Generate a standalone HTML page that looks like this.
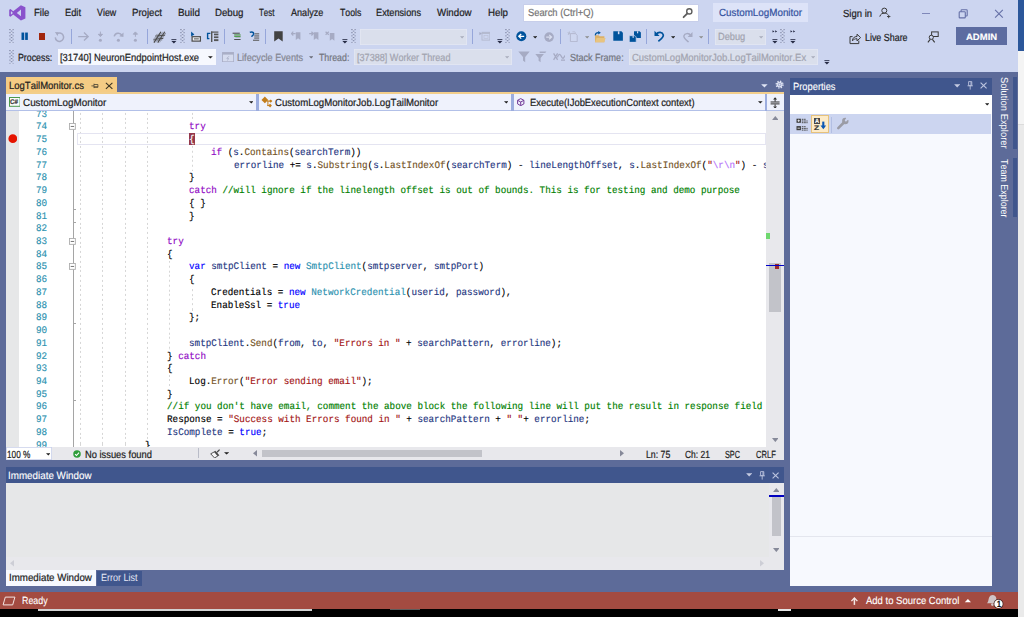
<!DOCTYPE html>
<html lang="en">
<head>
<meta charset="utf-8">
<title>CustomLogMonitor - LogTailMonitor.cs</title>
<style>
html,body{margin:0;padding:0}
body{width:1024px;height:617px;position:relative;overflow:hidden;background:#eaeaea;font-family:"Liberation Sans",sans-serif;font-size:10.4px;color:#1e1e1e;text-rendering:geometricPrecision;font-kerning:none}
.a{position:absolute;display:block}
.t{position:absolute;white-space:pre;margin:0;padding:0;line-height:12px;transform-origin:0 0;-webkit-text-stroke:0.22px currentColor}
.c,.n{position:absolute;white-space:pre;font-family:"Liberation Mono",monospace;font-size:10px;line-height:12px;color:#000;transform-origin:0 0;-webkit-text-stroke:0.15px currentColor}
.n{color:#2b91af}
.l{-webkit-text-stroke:0.12px currentColor}
.l0{-webkit-text-stroke:0}
.gd{width:1px;background:repeating-linear-gradient(to bottom,#d6d6d6 0,#d6d6d6 2px,transparent 2px,transparent 4.773px)}
.w{color:#fff}.k{color:#8f08c4}.b{color:#0000ff}.y{color:#2b91af}.m{color:#74531f}.v{color:#1f377f}.s{color:#a31515}.e{color:#b776fb}.g{color:#008000}
</style>
</head>
<body>
<!-- desktop strip right of the window + taskbar edge -->
<div class="a" style="left:1016.00px;top:50.00px;width:8.00px;height:567.00px;background:#eaeaea;"></div>
<div class="a" style="left:1016.00px;top:50.00px;width:8.00px;height:74.90px;background:#dcdcdc;"></div>
<div class="a" style="left:1016.00px;top:50.00px;width:8.00px;height:74.10px;background:#f4f4f4;"></div>
<div class="a" style="left:1016.00px;top:0.00px;width:8.00px;height:50.60px;background:#2b579a;"></div>
<!-- IDE window -->
<div class="a" style="left:0.00px;top:0.00px;width:1017.50px;height:617.00px;background:#5d6b99;"></div>
<!-- command bar background -->
<div class="a" style="left:0.00px;top:0.00px;width:1017.50px;height:72.00px;background:#ccd5f0;"></div>
<!-- status bar -->
<div class="a" style="left:0.00px;top:591.50px;width:1017.50px;height:17.90px;background:#a34b41;"></div>
<div class="a" style="left:0.00px;top:609.10px;width:1017.50px;height:7.90px;background:#000000;"></div>
<div class="a" style="left:38.00px;top:609.20px;width:274.00px;height:1.50px;background:#d2d2d2;"></div>
<div class="a" style="left:390.20px;top:609.30px;width:29.60px;height:1.20px;background:#5c5c5c;"></div>
<div class="a" style="left:777.50px;top:609.20px;width:13.50px;height:1.50px;background:#e4e4e4;"></div>
<!-- Visual Studio logo -->
<svg class="a" style="left:9.20px;top:4.80px;" width="16.6" height="15.8" viewBox="0 0 16.6 15.8"><path fill="#8a52cc" d="M11.9 0.2 L16.4 2.3 L16.4 13.5 L11.9 15.6 L4.2 9.6 L1.5 11.7 L0.2 11.0 L0.2 4.8 L1.5 4.1 L4.2 6.2 Z M1.9 6.0 L1.9 9.8 L4.0 7.9 Z M12.0 4.6 L7.8 7.9 L12.0 11.2 Z"/></svg>
<!-- menu -->
<div class="t" style="left:34.42px;top:8px;color:#1e1e1e;transform:scaleX(0.9195);">File</div>
<div class="t" style="left:64.84px;top:8px;color:#1e1e1e;transform:scaleX(0.8946);">Edit</div>
<div class="t" style="left:97.46px;top:8px;color:#1e1e1e;transform:scaleX(0.8525);">View</div>
<div class="t" style="left:132.16px;top:8px;color:#1e1e1e;transform:scaleX(0.9256);">Project</div>
<div class="t" style="left:177.89px;top:8px;color:#1e1e1e;transform:scaleX(0.9490);">Build</div>
<div class="t" style="left:215.01px;top:8px;color:#1e1e1e;transform:scaleX(0.9305);">Debug</div>
<div class="t" style="left:259.42px;top:8px;color:#1e1e1e;transform:scaleX(0.7632);">Test</div>
<div class="t" style="left:291.43px;top:8px;color:#1e1e1e;transform:scaleX(0.8722);">Analyze</div>
<div class="t" style="left:339.75px;top:8px;color:#1e1e1e;transform:scaleX(0.8400);">Tools</div>
<div class="t" style="left:376.34px;top:8px;color:#1e1e1e;transform:scaleX(0.8853);">Extensions</div>
<div class="t" style="left:437.41px;top:8px;color:#1e1e1e;transform:scaleX(0.9359);">Window</div>
<div class="t" style="left:487.90px;top:8px;color:#1e1e1e;transform:scaleX(0.9378);">Help</div>
<!-- search box -->
<div class="a" style="left:524.40px;top:4.75px;width:173.70px;height:16.25px;background:#ffffff;box-shadow:0 0 0 0.6px #c3cbe6;"></div>
<div class="t" style="left:527.88px;top:8px;color:#767676;transform:scaleX(0.8974);">Search (Ctrl+Q)</div>
<svg class="a" style="left:681.50px;top:6.50px;" width="12" height="12" viewBox="0 0 12 12"><circle cx="7.3" cy="4.4" r="2.6" fill="none" stroke="#5e5e5e" stroke-width="1.4"/><path d="M5.4 6.4 L1.6 10.2" stroke="#5e5e5e" stroke-width="1.8" stroke-linecap="round"/></svg>
<!-- solution name badge -->
<div class="a" style="left:712.90px;top:3.10px;width:95.20px;height:18.80px;background:#dde3f8;"></div>
<div class="t" style="left:719.10px;top:8px;color:#3553a0;transform:scaleX(0.9454);">CustomLogMonitor</div>
<!-- sign in + window buttons -->
<div class="t" style="left:843.27px;top:9px;color:#1e1e1e;transform:scaleX(0.9135);">Sign in</div>
<svg class="a" style="left:878.50px;top:6.50px;" width="13" height="12.5" viewBox="0 0 13 12.5"><circle cx="5.3" cy="3.6" r="2.5" fill="none" stroke="#3a3a3a" stroke-width="1"/><path d="M0.8 9.6 C1.6 6.6 3.6 6.2 5.3 6.2 C6.8 6.2 8 6.5 8.9 7.6" fill="none" stroke="#3a3a3a" stroke-width="1"/><path d="M9.7 7.8 V11.2 M8 9.5 H11.4" stroke="#3a3a3a" stroke-width="0.9"/></svg>
<div class="a" style="left:921.90px;top:12.50px;width:8.20px;height:1.30px;background:#7f88b9;"></div>
<svg class="a" style="left:957.80px;top:8.60px;" width="10.4" height="10" viewBox="0 0 10.4 10"><rect x="1.2" y="2.8" width="6.1" height="6.1" rx="0.7" fill="none" stroke="#646fa6" stroke-width="1.1"/><path d="M3.1 2.8 V1.4 Q3.1 0.7 3.8 0.7 H8.5 Q9.2 0.7 9.2 1.4 V6.3 Q9.2 7 8.5 7 H7.3" fill="none" stroke="#646fa6" stroke-width="1.1"/></svg>
<svg class="a" style="left:994.40px;top:8.80px;" width="10" height="10" viewBox="0 0 10 10"><path d="M1.1 0.8 L8.8 8.6 M8.8 0.8 L1.1 8.6" stroke="#646fa6" stroke-width="1.1"/></svg>
<!-- live share / feedback / admin -->
<svg class="a" style="left:848.60px;top:33.00px;" width="12.5" height="11.5" viewBox="0 0 12.5 11.5"><path d="M3.6 3.6 H1 V10.6 H9.8 V7.6" fill="none" stroke="#3a3a3a" stroke-width="1"/><path d="M3.4 7.8 C3.6 5 5.2 3.6 8 3.5 V1.2 L11.6 4.6 L8 7.9 V5.7 C6.1 5.7 4.6 6.3 3.4 7.8 Z" fill="none" stroke="#3a3a3a" stroke-width="1" stroke-linejoin="round"/></svg>
<div class="t" style="left:864.72px;top:33px;color:#1e1e1e;transform:scaleX(0.8563);">Live Share</div>
<svg class="a" style="left:926.80px;top:30.60px;" width="12" height="12" viewBox="0 0 12 12"><rect x="4.6" y="0.9" width="6.6" height="4.6" fill="none" stroke="#3a3a3a" stroke-width="1"/><circle cx="4.3" cy="6.3" r="2.1" fill="#ccd5f0" stroke="#3a3a3a" stroke-width="1"/><path d="M0.9 11.4 L3.2 8.3 M7.7 11.4 L5.4 8.3" stroke="#3a3a3a" stroke-width="1.1"/></svg>
<div class="a" style="left:956.40px;top:26.90px;width:50.20px;height:18.10px;background:#5c6ca1;"></div>
<div class="t l" style="left:966.26px;top:31px;font-size:9.2px;color:#ffffff;font-weight:bold;transform:scaleX(1.0340);">ADMIN</div>
<!-- status bar content -->
<svg class="a" style="left:2.40px;top:596.20px;" width="14" height="10" viewBox="0 0 14 10"><path d="M3.3 1.1 H12.9 L10.7 8.9 H1.1 Z" fill="none" stroke="#f3e4e2" stroke-width="1"/></svg>
<div class="t l" style="left:21.97px;top:596px;color:#ffffff;transform:scaleX(0.8513);">Ready</div>
<svg class="a" style="left:850.00px;top:596.40px;" width="9" height="9.5" viewBox="0 0 9 9.5"><path d="M4.4 8.9 V2.4" fill="none" stroke="#f3e7e5" stroke-width="1.5"/><path d="M0.9 4.7 L4.4 0.9 L7.9 4.7 L6.9 5.5 L4.4 2.9 L1.9 5.5 Z" fill="#f3e7e5"/></svg>
<div class="t l" style="left:866.18px;top:596px;color:#ffffff;transform:scaleX(0.9138);">Add to Source Control</div>
<svg class="a" style="left:963.50px;top:598.40px;" width="8" height="5" viewBox="0 0 8 5"><path d="M0.8 4.3 L3.9 0.9 L7 4.3 Z" fill="#ffffff"/></svg>
<svg class="a" style="left:986.30px;top:593.80px;" width="18" height="15" viewBox="0 0 18 15"><path d="M1 9.2 C2.6 7.8 2.3 5.4 3.1 3.4 C3.9 1.6 5.4 0.8 7 0.9 C9.2 1.1 10.2 2.8 10.4 4.8 C10.6 6.6 10.8 8 11.9 9.2 Z" fill="#cfc5c7"/><circle cx="6.4" cy="10.6" r="1.4" fill="#cfc5c7"/><circle cx="12.5" cy="9.9" r="4.9" fill="#40221f"/><circle cx="12.5" cy="9.9" r="4.2" fill="#ffffff"/></svg>
<div class="t" style="left:996.65px;top:598px;font-size:9.0px;color:#111111;font-weight:bold;transform:scaleX(0.7880);">1</div>
<svg class="a" width="0" height="0" style="left:0;top:0"><defs><pattern id="gp" width="5.4" height="3.22" patternUnits="userSpaceOnUse"><rect x="0.3" y="0" width="1.2" height="1" fill="#727998"/><rect x="3.5" y="0" width="1.2" height="1" fill="#727998"/><rect x="1.9" y="0.05" width="1.2" height="0.9" fill="#e4e8f7"/><rect x="1.9" y="1.61" width="1.2" height="1" fill="#666d8e"/></pattern></defs></svg>
<!-- toolbar row: debug -->
<svg class="a" style="left:9.10px;top:29.10px;" width="5.4" height="13.9" viewBox="0 0 5.4 13.9"><rect width="5.4" height="13.9" fill="url(#gp)"/></svg>
<svg class="a" style="left:20.60px;top:31.80px;" width="8" height="8.6" viewBox="0 0 8 8.6"><rect x="0.5" y="0.55" width="2.7" height="7.4" fill="#00539c"/><rect x="4.15" y="0.55" width="2.7" height="7.4" fill="#00539c"/></svg>
<div class="a" style="left:39.00px;top:33.20px;width:6.10px;height:6.60px;background:#a1260d;"></div>
<svg class="a" style="left:54.40px;top:31.00px;" width="11" height="11.5" viewBox="0 0 11 11.5"><path d="M2.6 3.2 A4.15 4.15 0 1 1 1.3 6.4" fill="none" stroke="#a6abc4" stroke-width="1.5"/><path d="M0.9 0.9 L4.6 1.3 L3.6 4.9 Z" fill="#a6abc4"/></svg>
<div class="a" style="left:70.70px;top:28.80px;width:1.20px;height:15.40px;background:#96a6da;"></div>
<svg class="a" style="left:77.80px;top:32.00px;" width="11.5" height="9.5" viewBox="0 0 11.5 9.5"><path d="M0.2 4.6 H9.8 M6 0.6 L10.2 4.6 L6 8.6" fill="none" stroke="#a6abc4" stroke-width="1.4"/></svg>
<svg class="a" style="left:97.40px;top:31.40px;" width="7" height="11.5" viewBox="0 0 7 11.5"><path d="M3.4 0.6 V4 M1.3 3.3 H5.5 L3.4 5.6 Z" fill="#a6abc4" stroke="#a6abc4" stroke-width="1"/><circle cx="3.4" cy="9.2" r="1.55" fill="#a6abc4"/></svg>
<svg class="a" style="left:113.00px;top:31.40px;" width="11.5" height="11.5" viewBox="0 0 11.5 11.5"><path d="M1.2 5.4 C2.2 1.6 7.2 1.2 8.9 4.4" fill="none" stroke="#a6abc4" stroke-width="1.5"/><path d="M10.6 1.6 L10.4 6.1 L6.2 5.3 Z" fill="#a6abc4"/><circle cx="5.4" cy="9.2" r="1.55" fill="#a6abc4"/></svg>
<svg class="a" style="left:132.30px;top:31.40px;" width="7" height="11.5" viewBox="0 0 7 11.5"><path d="M3.4 5.8 V2.6 M1.3 3.2 H5.5 L3.4 0.9 Z" fill="#a6abc4" stroke="#a6abc4" stroke-width="1"/><circle cx="3.4" cy="9.2" r="1.55" fill="#a6abc4"/></svg>
<div class="a" style="left:147.00px;top:28.80px;width:1.20px;height:15.40px;background:#96a6da;"></div>
<svg class="a" style="left:153.20px;top:30.60px;" width="13" height="12.8" viewBox="0 0 13 12.8"><g stroke="#4b4b4b" fill="none"><path d="M0.95 11.6 L7.95 0.7 M4.75 11.6 L11.75 0.7" stroke-width="1.2"/><path d="M2.1 5.1 L12.1 4.2 M0.4 8.3 L10.3 7.4" stroke-width="1"/><path d="M2.9 11.6 L9.9 0.7 M6.6 11.6 L13 1.6 M1.2 6.7 L11.2 5.8 M-0.4 9.8 L9.4 8.9 M3 3.5 L12.8 2.6" stroke-width="0.45" opacity="0.7"/></g></svg>
<svg class="a" style="left:171.40px;top:39.00px;" width="6" height="5" viewBox="0 0 6 5"><rect x="0.4" y="0.2" width="5" height="0.9" fill="#262b45"/><path d="M0.4 1.9 H5.4 L2.9 4.5 Z" fill="#262b45"/></svg>
<!-- toolbar row: text editor -->
<svg class="a" style="left:179.90px;top:29.10px;" width="5.4" height="13.9" viewBox="0 0 5.4 13.9"><rect width="5.4" height="13.9" fill="url(#gp)"/></svg>
<svg class="a" style="left:190.00px;top:30.80px;" width="12" height="11" viewBox="0 0 12 11"><path d="M1.1 0.6 L1.1 5.6 L4.4 3.4 Z" fill="#00539c"/><rect x="2.1" y="5.7" width="8.3" height="4.4" fill="#f4f5fa" stroke="#4f4f4f" stroke-width="1.25"/><rect x="3.9" y="7.4" width="4.9" height="1" fill="#4f4f4f"/></svg>
<svg class="a" style="left:206.40px;top:30.60px;" width="13" height="11.8" viewBox="0 0 13 11.8"><path d="M4.4 2.4 H1.6 V7.6 H3.4" fill="none" stroke="#00539c" stroke-width="1.4"/><g fill="#555"><rect x="5" y="0.5" width="7.4" height="1.2"/><rect x="5" y="0.5" width="1.4" height="10.6"/><rect x="8" y="2.6" width="4.4" height="1.7"/><rect x="8" y="5.4" width="4.4" height="1.7"/><rect x="8" y="8.2" width="4.4" height="1.9"/></g></svg>
<div class="a" style="left:223.80px;top:28.80px;width:1.20px;height:15.40px;background:#96a6da;"></div>
<svg class="a" style="left:232.20px;top:31.80px;" width="9" height="8.5" viewBox="0 0 9 8.5"><rect x="0.6" y="0.7" width="7.2" height="1" fill="#424242"/><rect x="2.2" y="2.3" width="6.4" height="1" fill="#4fa24f"/><rect x="2.2" y="3.3" width="6.4" height="0.7" fill="#8c958c"/><rect x="2.2" y="4" width="6.4" height="1" fill="#4fa24f"/><rect x="3.4" y="5.3" width="5.2" height="0.7" fill="#a3a7b3"/><rect x="2.2" y="7.1" width="6.4" height="1" fill="#424242"/></svg>
<svg class="a" style="left:249.00px;top:31.20px;" width="11" height="10.5" viewBox="0 0 11 10.5"><path d="M0.8 1.4 C2.8 0.4 5 1.4 4.6 3.2 C4.3 4.4 3 4.6 2.6 5.8" fill="none" stroke="#00539c" stroke-width="1.5"/><g fill="#5d5d5d"><rect x="5.6" y="2.3" width="4.6" height="1.1"/><rect x="5.2" y="4.4" width="5" height="1.1"/><rect x="5.2" y="6.5" width="5" height="1.1"/><rect x="4" y="8.7" width="6.2" height="1.1"/></g></svg>
<div class="a" style="left:265.20px;top:28.80px;width:1.20px;height:15.40px;background:#96a6da;"></div>
<svg class="a" style="left:273.70px;top:30.90px;" width="9" height="10.8" viewBox="0 0 9 10.8"><path d="M0.2 0.2 H8.7 V10.5 L4.45 7.6 L0.2 10.5 Z" fill="#424242"/></svg>
<svg class="a" style="left:291.40px;top:31.20px;" width="10" height="10" viewBox="0 0 10 10"><path d="M4.8 1.2 H9.4 V9.1 L7.1 7.3 L4.8 9.1 Z" fill="#a6abc4"/><path d="M0.5 2.6 H4.6 M2.3 0.7 L0.4 2.6 L2.3 4.5" fill="none" stroke="#a6abc4" stroke-width="1.2"/></svg>
<svg class="a" style="left:308.60px;top:31.20px;" width="10" height="10" viewBox="0 0 10 10"><path d="M4.8 1.2 H9.4 V9.1 L7.1 7.3 L4.8 9.1 Z" fill="#a6abc4"/><path d="M0.2 2.6 H4.4 M2.4 0.7 L4.4 2.6 L2.4 4.5" fill="none" stroke="#a6abc4" stroke-width="1.2"/></svg>
<svg class="a" style="left:325.20px;top:31.20px;" width="10" height="10" viewBox="0 0 10 10"><path d="M4.8 1.9 H9.4 V9.799999999999999 L7.1 8.0 L4.8 9.799999999999999 Z" fill="#a6abc4"/><path d="M0.6 0.7 L3.8 3.7 M3.8 0.7 L0.6 3.7" fill="none" stroke="#a6abc4" stroke-width="1.2"/></svg>
<svg class="a" style="left:342.10px;top:39.00px;" width="6" height="5" viewBox="0 0 6 5"><rect x="0.4" y="0.2" width="5" height="0.9" fill="#262b45"/><path d="M0.4 1.9 H5.4 L2.9 4.5 Z" fill="#262b45"/></svg>
<!-- toolbar row: find / navigation / standard -->
<svg class="a" style="left:351.00px;top:29.10px;" width="5.4" height="13.9" viewBox="0 0 5.4 13.9"><rect width="5.4" height="13.9" fill="url(#gp)"/></svg>
<div class="a" style="left:360.20px;top:28.50px;width:107.00px;height:16.10px;background:#dadfec;box-shadow:inset 0 0 0 0.8px #e3e7f3;"></div>
<svg class="a" style="left:459.80px;top:35.60px;" width="4.2" height="3" viewBox="0 0 4.2 3"><path d="M0 0.2 H4.2 L2.1 2.6 Z" fill="#a9adbd"/></svg>
<div class="a" style="left:471.90px;top:28.80px;width:1.20px;height:15.40px;background:#96a6da;"></div>
<svg class="a" style="left:478.80px;top:31.20px;" width="11.6" height="9.8" viewBox="0 0 11.6 9.8"><path d="M0.4 0.9 L3 2.6 L0.4 4.3 Z" fill="#a6abc4"/><rect x="3" y="1.3" width="7.9" height="7.8" fill="none" stroke="#b3b8cd" stroke-width="0.9"/><rect x="3" y="1.3" width="7.9" height="1.6" fill="#b3b8cd"/><rect x="5" y="4.6" width="4" height="2.8" fill="none" stroke="#bcc1d6" stroke-width="0.7"/></svg>
<svg class="a" style="left:496.60px;top:39.00px;" width="6" height="5" viewBox="0 0 6 5"><rect x="0.4" y="0.2" width="5" height="0.9" fill="#262b45"/><path d="M0.4 1.9 H5.4 L2.9 4.5 Z" fill="#262b45"/></svg>
<svg class="a" style="left:505.10px;top:29.10px;" width="5.4" height="13.9" viewBox="0 0 5.4 13.9"><rect width="5.4" height="13.9" fill="url(#gp)"/></svg>
<svg class="a" style="left:516.20px;top:31.20px;" width="10.6" height="10.6" viewBox="0 0 10.6 10.6"><circle cx="5.3" cy="5.3" r="5" fill="#00539c"/><path d="M8.2 5.3 H3 M5.2 3 L2.8 5.3 L5.2 7.6" fill="none" stroke="#fff" stroke-width="1.3"/></svg>
<svg class="a" style="left:532.85px;top:35.60px;" width="4.3" height="3" viewBox="0 0 4.3 3"><path d="M0 0.2 H4.3 L2.15 2.6 Z" fill="#1e1e1e"/></svg>
<svg class="a" style="left:543.70px;top:31.60px;" width="10.2" height="10.2" viewBox="0 0 10.2 10.2"><circle cx="5.1" cy="5.1" r="4.8" fill="#a6abc4"/><path d="M2.2 5.1 H7.4 M5.2 2.9 L7.6 5.1 L5.2 7.3" fill="none" stroke="#d9def0" stroke-width="1.2"/></svg>
<div class="a" style="left:559.60px;top:28.80px;width:1.20px;height:15.40px;background:#96a6da;"></div>
<svg class="a" style="left:567.40px;top:31.00px;" width="11.2" height="11.4" viewBox="0 0 11.2 11.4"><path d="M3.4 2.6 H8.6 L10.2 4.4 V10.6 H3.4 Z" fill="#cfd7f0" stroke="#b1b6cd" stroke-width="0.9"/><path d="M1.2 3.4 L2.6 1.2 M0.6 1.6 L3.4 3 M2.4 0.4 L1.6 4" stroke="#b4b9ce" stroke-width="0.8"/><path d="M5.4 0.8 H7.8 L8.8 2.4" fill="none" stroke="#b4b9ce" stroke-width="0.7"/></svg>
<svg class="a" style="left:584.55px;top:35.60px;" width="4.3" height="3" viewBox="0 0 4.3 3"><path d="M0 0.2 H4.3 L2.15 2.6 Z" fill="#8c8c8c"/></svg>
<svg class="a" style="left:594.20px;top:30.80px;" width="12" height="12" viewBox="0 0 12 12"><path d="M1 4.2 H4.6 L5.6 5.3 H10.4 V11.2 H1 Z" fill="#dcb067"/><path d="M1 11.2 L2.6 7 H11.6 L10.2 11.2 Z" fill="#e8c47f"/><path d="M1.4 4.4 C1.2 2.4 2.6 1.5 4.6 1.6" fill="none" stroke="#00539c" stroke-width="1.3"/><path d="M4.2 0 L6.9 1.7 L4.2 3.5 Z" fill="#00539c"/></svg>
<svg class="a" style="left:612.60px;top:31.40px;" width="10.2" height="10" viewBox="0 0 10.2 10"><path d="M0.3 0.3 H8.4 L9.9 1.8 V9.7 H0.3 Z" fill="#00539c"/><rect x="4.9" y="0.3" width="1.5" height="2.9" fill="#d5dcf3"/></svg>
<svg class="a" style="left:629.20px;top:30.80px;" width="12.2" height="11.6" viewBox="0 0 12.2 11.6"><path d="M5 0.3 H10.6 L11.9 1.6 V7 H5 Z" fill="#00539c"/><rect x="8" y="0.3" width="1.2" height="2" fill="#d5dcf3"/><path d="M0.3 4.7 H5.9 L7.2 6 V11.3 H0.3 Z" fill="#00539c" stroke="#ccd5f0" stroke-width="0.7"/><rect x="3.6" y="5" width="1.1" height="1.9" fill="#d5dcf3"/></svg>
<div class="a" style="left:645.90px;top:28.80px;width:1.20px;height:15.40px;background:#96a6da;"></div>
<svg class="a" style="left:653.60px;top:30.40px;" width="11" height="12" viewBox="0 0 11 12"><path d="M2.2 4.4 C4.2 1.4 8.6 2 9.3 4.9 C9.8 7.2 7.4 8.8 4.4 11.3" fill="none" stroke="#00539c" stroke-width="1.7"/><path d="M0.5 0.8 V5.9 H5.6 Z" fill="#00539c"/></svg>
<svg class="a" style="left:671.15px;top:35.60px;" width="4.3" height="3" viewBox="0 0 4.3 3"><path d="M0 0.2 H4.3 L2.15 2.6 Z" fill="#1e1e1e"/></svg>
<svg class="a" style="left:681.60px;top:30.60px;" width="11" height="12" viewBox="0 0 11 12"><path d="M8.8 4.4 C6.8 1.6 2.6 2.2 1.9 4.9 C1.4 7.2 3.8 8.6 6.6 11" fill="none" stroke="#a6abc4" stroke-width="1.4"/><path d="M10.5 1 V5.9 H5.6 Z" fill="#a6abc4"/></svg>
<svg class="a" style="left:699.05px;top:35.60px;" width="4.3" height="3" viewBox="0 0 4.3 3"><path d="M0 0.2 H4.3 L2.15 2.6 Z" fill="#8c8c8c"/></svg>
<div class="a" style="left:707.90px;top:28.80px;width:1.20px;height:15.40px;background:#96a6da;"></div>
<div class="a" style="left:715.20px;top:28.50px;width:50.80px;height:16.10px;background:#dadfec;box-shadow:inset 0 0 0 0.8px #e3e7f3;"></div>
<div class="t" style="left:718.14px;top:32px;color:#a2a4b0;transform:scaleX(0.8893);">Debug</div>
<svg class="a" style="left:758.80px;top:35.60px;" width="4.2" height="3" viewBox="0 0 4.2 3"><path d="M0 0.2 H4.2 L2.1 2.6 Z" fill="#a9adbd"/></svg>
<svg class="a" style="left:771.50px;top:39.00px;" width="6" height="5" viewBox="0 0 6 5"><rect x="0.4" y="0.2" width="5" height="0.9" fill="#262b45"/><path d="M0.4 1.9 H5.4 L2.9 4.5 Z" fill="#262b45"/></svg>
<svg class="a" style="left:771.50px;top:30.00px;" width="6" height="3" viewBox="0 0 6 3"><path d="M0.5 0.2 L2.5 1.4 L0.5 2.6 Z M3.2 0.2 L5.2 1.4 L3.2 2.6 Z" fill="#262b45"/></svg>
<svg class="a" style="left:780.10px;top:29.10px;" width="5.4" height="13.9" viewBox="0 0 5.4 13.9"><rect width="5.4" height="13.9" fill="url(#gp)"/></svg>
<svg class="a" style="left:789.60px;top:39.00px;" width="6" height="5" viewBox="0 0 6 5"><rect x="0.4" y="0.2" width="5" height="0.9" fill="#262b45"/><path d="M0.4 1.9 H5.4 L2.9 4.5 Z" fill="#262b45"/></svg>
<svg class="a" style="left:789.60px;top:30.00px;" width="6" height="3" viewBox="0 0 6 3"><path d="M0.5 0.2 L2.5 1.4 L0.5 2.6 Z M3.2 0.2 L5.2 1.4 L3.2 2.6 Z" fill="#262b45"/></svg>
<!-- toolbar row: debug location -->
<svg class="a" style="left:9.10px;top:50.10px;" width="5.4" height="13.7" viewBox="0 0 5.4 13.7"><rect width="5.4" height="13.7" fill="url(#gp)"/></svg>
<div class="t" style="left:18.23px;top:53px;color:#1e1e1e;transform:scaleX(0.8472);">Process:</div>
<div class="a" style="left:57.50px;top:49.00px;width:158.50px;height:16.40px;background:#f6f8fe;"></div>
<div class="t" style="left:60.43px;top:53px;color:#1e1e1e;transform:scaleX(0.9050);">[31740] NeuronEndpointHost.exe</div>
<svg class="a" style="left:208.20px;top:56.30px;" width="4.8" height="3" viewBox="0 0 4.8 3"><path d="M0 0.2 H4.8 L2.4 2.6 Z" fill="#1e1e1e"/></svg>
<svg class="a" style="left:222.00px;top:51.80px;" width="12.4" height="10.4" viewBox="0 0 12.4 10.4"><rect x="0.5" y="0.6" width="11.2" height="9.2" fill="#d5dbee" stroke="#a9aec6" stroke-width="0.9"/><rect x="0.5" y="0.6" width="11.2" height="2" fill="#a9aec6"/><path d="M7 4.2 L4.8 6.4 H6.6 L5.4 8.6" fill="none" stroke="#a9aec6" stroke-width="0.8"/></svg>
<div class="t" style="left:237.45px;top:53px;color:#858793;transform:scaleX(0.8807);">Lifecycle Events</div>
<svg class="a" style="left:308.80px;top:56.30px;" width="4.4" height="3" viewBox="0 0 4.4 3"><path d="M0 0.2 H4.4 L2.2 2.6 Z" fill="#6a6c78"/></svg>
<div class="t" style="left:318.75px;top:53px;color:#73757f;transform:scaleX(0.8468);">Thread:</div>
<div class="a" style="left:354.40px;top:49.00px;width:158.10px;height:16.40px;background:#dadfec;box-shadow:inset 0 0 0 0.8px #e3e7f3;"></div>
<div class="t" style="left:357.15px;top:53px;color:#a2a4b0;transform:scaleX(0.8746);">[37388] Worker Thread</div>
<svg class="a" style="left:505.20px;top:56.30px;" width="4.2" height="3" viewBox="0 0 4.2 3"><path d="M0 0.2 H4.2 L2.1 2.6 Z" fill="#a9adbd"/></svg>
<svg class="a" style="left:517.80px;top:51.20px;" width="12.4" height="11.8" viewBox="0 0 12.4 11.8"><path d="M0.3 0.6 H11.7 L7.2 6 V11.2 L5 9.6 V6 Z" fill="#a6abc4"/></svg>
<svg class="a" style="left:535.40px;top:51.20px;" width="12" height="11.8" viewBox="0 0 12 11.8"><path d="M4.6 0.5 H11.4 L10.2 2 H4.6 Z" fill="#a6abc4"/><path d="M0.3 3 H8.9 L5.6 7 V11.2 L3.6 9.8 V7 Z" fill="#a6abc4"/></svg>
<svg class="a" style="left:552.60px;top:52.20px;" width="12.6" height="9.6" viewBox="0 0 12.6 9.6"><path d="M0.6 1.4 L4.6 7.8 M4.6 1.4 L0.6 7.8 M4.4 5.4 C5.6 1.6 7.2 1.6 8.4 4.6 C9.4 7 10.6 7 11.9 3.4 M8 8.2 H12.2" fill="none" stroke="#a6abc4" stroke-width="1.3"/></svg>
<div class="t" style="left:570.04px;top:53px;color:#73757f;transform:scaleX(0.8682);">Stack Frame:</div>
<div class="a" style="left:628.50px;top:49.00px;width:189.60px;height:16.40px;background:#dadfec;box-shadow:inset 0 0 0 0.8px #e3e7f3;"></div>
<div class="t" style="left:631.62px;top:53px;color:#a2a4b0;transform:scaleX(0.9109);">CustomLogMonitorJob.LogTailMonitor.Ex</div>
<svg class="a" style="left:810.90px;top:56.30px;" width="4.2" height="3" viewBox="0 0 4.2 3"><path d="M0 0.2 H4.2 L2.1 2.6 Z" fill="#a9adbd"/></svg>
<svg class="a" style="left:824.00px;top:59.80px;" width="6" height="5" viewBox="0 0 6 5"><rect x="0.4" y="0.2" width="5" height="0.9" fill="#262b45"/><path d="M0.4 1.9 H5.4 L2.9 4.5 Z" fill="#262b45"/></svg>
<!-- editor surface -->
<div class="a" style="left:5.80px;top:109.60px;width:778.10px;height:338.40px;background:#e8e8ec;"></div>
<div class="a" style="left:5.80px;top:109.60px;width:760.10px;height:337.40px;background:#ffffff;"></div>
<div class="a" style="left:5.80px;top:109.60px;width:13.10px;height:337.40px;background:#e6e7e8;"></div>
<!-- document tab strip -->
<div class="a" style="left:5.80px;top:77.20px;width:111.70px;height:15.20px;background:#f5cc84;"></div>
<div class="t" style="left:8.52px;top:81px;color:#1e1e1e;transform:scaleX(0.9141);">LogTailMonitor.cs</div>
<svg class="a" style="left:90.80px;top:82.20px;" width="8" height="8" viewBox="0 0 8 8"><path d="M0.4 3.9 H3 M3 1.7 V6.1 M3 2.5 H6.9 V5.3 H3 M3 4.8 H6.9" fill="none" stroke="#4a4232" stroke-width="0.8"/></svg>
<svg class="a" style="left:105.40px;top:82.20px;" width="8.4" height="7.6" viewBox="0 0 8.4 7.6"><path d="M0.9 0.8 L7.4 6.8 M7.4 0.8 L0.9 6.8" stroke="#3a3322" stroke-width="1.1"/></svg>
<svg class="a" style="left:761.30px;top:84.00px;" width="7" height="4" viewBox="0 0 7 4"><path d="M0.2 0.2 H6.6 L3.4 3.6 Z" fill="#dfe4f4"/></svg>
<svg class="a" style="left:774.50px;top:79.70px;" width="9.2" height="9.2" viewBox="0 0 9.2 9.2"><circle cx="4.6" cy="4.6" r="3.45" fill="none" stroke="#dfe4f4" stroke-width="1.3" stroke-dasharray="1.35 1.36"/><circle cx="4.6" cy="4.6" r="2.9" fill="#dfe4f4"/><circle cx="4.6" cy="4.6" r="1.3" fill="none" stroke="#7f8bb9" stroke-width="0.7"/></svg>
<div class="a" style="left:5.80px;top:92.10px;width:778.10px;height:2.20px;background:#f2ce8b;"></div>
<!-- navigation bar -->
<div class="a" style="left:5.80px;top:93.80px;width:778.10px;height:16.80px;background:#eff2fc;"></div>
<div class="a" style="left:5.80px;top:109.80px;width:778.10px;height:1.20px;background:#b2c0e8;"></div>
<div class="a" style="left:256.10px;top:94.20px;width:2.60px;height:16.40px;background:#9cadde;"></div>
<div class="a" style="left:511.00px;top:94.20px;width:2.60px;height:16.40px;background:#9cadde;"></div>
<div class="a" style="left:764.60px;top:94.20px;width:2.60px;height:16.40px;background:#9cadde;"></div>
<svg class="a" style="left:8.70px;top:97.10px;" width="11.6" height="9.8" viewBox="0 0 11.6 9.8"><rect x="0.5" y="0.5" width="10.6" height="8.8" fill="#fbfdfb" stroke="#4c9a4c" stroke-width="1"/></svg>
<div class="t" style="left:10.34px;top:97px;font-size:6.8px;color:#3a3a3a;font-weight:bold;transform:scaleX(0.9152);">C#</div>
<div class="t" style="left:22.50px;top:98px;color:#1e1e1e;transform:scaleX(0.9500);">CustomLogMonitor</div>
<svg class="a" style="left:248.50px;top:101.10px;" width="4.6" height="3" viewBox="0 0 4.6 3"><path d="M0 0.2 H4.6 L2.3 2.6 Z" fill="#1e1e1e"/></svg>
<svg class="a" style="left:261.20px;top:95.60px;" width="12" height="12" viewBox="0 0 12 12"><g fill="#c27d1a"><path d="M0.5 3.95 L3.85 0.6 L7.2 3.95 L3.85 7.3 Z"/><path d="M8 5.1 L9.7 3.4 L11.4 5.1 L9.7 6.8 Z"/><path d="M7.3 9.6 L9.1 7.8 L10.9 9.6 L9.1 11.4 Z"/><rect x="6.2" y="4.6" width="2.6" height="1"/><rect x="6.4" y="4.6" width="1" height="5.4"/><rect x="6.4" y="9.1" width="1.6" height="1"/></g></svg>
<div class="t" style="left:275.21px;top:98px;color:#1e1e1e;transform:scaleX(0.9259);">CustomLogMonitorJob.LogTailMonitor</div>
<svg class="a" style="left:503.70px;top:101.10px;" width="4.6" height="3" viewBox="0 0 4.6 3"><path d="M0 0.2 H4.6 L2.3 2.6 Z" fill="#1e1e1e"/></svg>
<svg class="a" style="left:517.20px;top:97.60px;" width="8" height="8.6" viewBox="0 0 8 8.6"><path d="M3.7 0.6 L6.9 2.3 V5.9 L3.7 7.7 L0.6 5.9 V2.3 Z M0.8 2.4 L3.7 4 L6.8 2.4 M3.7 4 V7.6" fill="none" stroke="#6a2f91" stroke-width="0.95"/></svg>
<div class="t" style="left:530.18px;top:98px;color:#1e1e1e;transform:scaleX(0.9045);">Execute(IJobExecutionContext context)</div>
<svg class="a" style="left:758.40px;top:101.10px;" width="4.6" height="3" viewBox="0 0 4.6 3"><path d="M0 0.2 H4.6 L2.3 2.6 Z" fill="#1e1e1e"/></svg>
<svg class="a" style="left:770.00px;top:96.60px;" width="10.4" height="11.6" viewBox="0 0 10.4 11.6"><path d="M0.6 5 H9.6 M0.6 6.9 H9.6" stroke="#2a2a2a" stroke-width="1"/><path d="M5.1 0.3 L7.1 2.4 H3.1 Z M5.1 11.5 L7.1 9.4 H3.1 Z" fill="#2a2a2a"/><path d="M5.1 2 V4.6 M5.1 7.4 V9.6" stroke="#2a2a2a" stroke-width="1"/></svg>
<div class="a" style="left:73.10px;top:110.60px;width:1.00px;height:336.40px;background:#a5a5a5;"></div>
<div class="a" style="left:74.00px;top:208.73px;width:2.20px;height:0.90px;background:#a5a5a5;"></div>
<div class="a" style="left:74.00px;top:221.86px;width:2.20px;height:0.90px;background:#a5a5a5;"></div>
<div class="a" style="left:74.00px;top:323.30px;width:2.20px;height:0.90px;background:#a5a5a5;"></div>
<div class="a" style="left:74.00px;top:399.68px;width:2.20px;height:0.90px;background:#a5a5a5;"></div>
<svg class="a" style="left:69.40px;top:123.40px;" width="7" height="7" viewBox="0 0 7 7"><rect x="0.45" y="0.45" width="5.9" height="5.9" fill="#ffffff" stroke="#adadad" stroke-width="0.9"/><rect x="1.7" y="2.95" width="3.4" height="0.9" fill="#6a6a6a"/></svg>
<svg class="a" style="left:69.40px;top:237.97px;" width="7" height="7" viewBox="0 0 7 7"><rect x="0.45" y="0.45" width="5.9" height="5.9" fill="#ffffff" stroke="#adadad" stroke-width="0.9"/><rect x="1.7" y="2.95" width="3.4" height="0.9" fill="#6a6a6a"/></svg>
<svg class="a" style="left:69.40px;top:263.43px;" width="7" height="7" viewBox="0 0 7 7"><rect x="0.45" y="0.45" width="5.9" height="5.9" fill="#ffffff" stroke="#adadad" stroke-width="0.9"/><rect x="1.7" y="2.95" width="3.4" height="0.9" fill="#6a6a6a"/></svg>
<div class="a gd" style="left:80.00px;top:110.60px;height:336.40px;background-position:0 -3.07px"></div>
<div class="a gd" style="left:102.26px;top:110.60px;height:336.40px;background-position:0 -3.07px"></div>
<div class="a gd" style="left:124.52px;top:110.60px;height:336.40px;background-position:0 -3.07px"></div>
<div class="a gd" style="left:146.78px;top:110.60px;height:336.40px;background-position:0 -3.07px"></div>
<div class="a gd" style="left:191.50px;top:110.60px;height:9.57px;background-position:0 -3.07px"></div>
<div class="a gd" style="left:191.50px;top:145.96px;height:25.46px;background-position:0 -0.25px"></div>
<div class="a gd" style="left:169.04px;top:260.53px;height:89.11px;background-position:0 -0.27px"></div>
<div class="a gd" style="left:191.50px;top:285.99px;height:25.46px;background-position:0 -1.86px"></div>
<div class="a gd" style="left:169.04px;top:375.10px;height:12.73px;background-position:0 -0.29px"></div>
<div class="a" style="left:76.70px;top:133.20px;width:689.60px;height:11.70px;background:transparent;box-shadow:inset 0 0 0 0.9px #e4e4f1;"></div>
<svg class="a" style="left:7.60px;top:134.00px;" width="9.6" height="9.6" viewBox="0 0 9.6 9.6"><circle cx="4.8" cy="4.7" r="4.4" fill="#e51400"/></svg>
<div class="a" style="left:188.80px;top:133.00px;width:6.17px;height:12.20px;background:#94384b;"></div>
<div class="a" style="left:5.8px;top:110.6px;width:760.10px;height:336.40px;overflow:hidden">
<div class="n" style="left:30.20px;top:-0.60px;transform:scaleX(0.9273)">73</div>
<div class="n" style="left:30.20px;top:11.40px;transform:scaleX(0.9273)">74</div>
<div class="c" style="left:183.30px;top:11.40px;transform:scaleX(0.9273)"><span class="k">try</span></div>
<div class="n" style="left:30.20px;top:24.40px;transform:scaleX(0.9273)">75</div>
<div class="c" style="left:183.30px;top:24.40px;transform:scaleX(0.9273)"><span class="w">{</span></div>
<div class="n" style="left:30.20px;top:37.40px;transform:scaleX(0.9273)">76</div>
<div class="c" style="left:205.56px;top:37.40px;transform:scaleX(0.9273)"><span class="k">if</span> (<span class="v">s</span>.<span class="m">Contains</span>(<span class="v">searchTerm</span>))</div>
<div class="n" style="left:30.20px;top:50.40px;transform:scaleX(0.9273)">77</div>
<div class="c" style="left:227.82px;top:50.40px;transform:scaleX(0.9273)"><span class="v">errorline</span> += <span class="v">s</span>.<span class="m">Substring</span>(<span class="v">s</span>.<span class="m">LastIndexOf</span>(<span class="v">searchTerm</span>) - <span class="v">lineLengthOffset</span>, <span class="v">s</span>.<span class="m">LastIndexOf</span>(<span class="s">"</span><span class="e">\r\n</span><span class="s">"</span>) - <span class="v">s</span></div>
<div class="n" style="left:30.20px;top:62.40px;transform:scaleX(0.9273)">78</div>
<div class="c" style="left:183.30px;top:62.40px;transform:scaleX(0.9273)">}</div>
<div class="n" style="left:30.20px;top:75.40px;transform:scaleX(0.9273)">79</div>
<div class="c" style="left:183.30px;top:75.40px;transform:scaleX(0.9273)"><span class="k">catch</span> <span class="g">//will ignore if the linelength offset is out of bounds. This is for testing and demo purpose</span></div>
<div class="n" style="left:30.20px;top:88.40px;transform:scaleX(0.9273)">80</div>
<div class="c" style="left:183.30px;top:88.40px;transform:scaleX(0.9273)">{ }</div>
<div class="n" style="left:30.20px;top:101.40px;transform:scaleX(0.9273)">81</div>
<div class="c" style="left:183.30px;top:101.40px;transform:scaleX(0.9273)">}</div>
<div class="n" style="left:30.20px;top:113.40px;transform:scaleX(0.9273)">82</div>
<div class="n" style="left:30.20px;top:126.40px;transform:scaleX(0.9273)">83</div>
<div class="c" style="left:161.04px;top:126.40px;transform:scaleX(0.9273)"><span class="k">try</span></div>
<div class="n" style="left:30.20px;top:139.40px;transform:scaleX(0.9273)">84</div>
<div class="c" style="left:161.04px;top:139.40px;transform:scaleX(0.9273)">{</div>
<div class="n" style="left:30.20px;top:151.40px;transform:scaleX(0.9273)">85</div>
<div class="c" style="left:183.30px;top:151.40px;transform:scaleX(0.9273)"><span class="b">var</span> <span class="v">smtpClient</span> = <span class="b">new</span> <span class="y">SmtpClient</span>(<span class="v">smtpserver</span>, <span class="v">smtpPort</span>)</div>
<div class="n" style="left:30.20px;top:164.40px;transform:scaleX(0.9273)">86</div>
<div class="c" style="left:183.30px;top:164.40px;transform:scaleX(0.9273)">{</div>
<div class="n" style="left:30.20px;top:177.40px;transform:scaleX(0.9273)">87</div>
<div class="c" style="left:205.56px;top:177.40px;transform:scaleX(0.9273)">Credentials = <span class="b">new</span> <span class="y">NetworkCredential</span>(<span class="v">userid</span>, <span class="v">password</span>),</div>
<div class="n" style="left:30.20px;top:190.40px;transform:scaleX(0.9273)">88</div>
<div class="c" style="left:205.56px;top:190.40px;transform:scaleX(0.9273)">EnableSsl = <span class="b">true</span></div>
<div class="n" style="left:30.20px;top:202.40px;transform:scaleX(0.9273)">89</div>
<div class="c" style="left:183.30px;top:202.40px;transform:scaleX(0.9273)">};</div>
<div class="n" style="left:30.20px;top:215.40px;transform:scaleX(0.9273)">90</div>
<div class="n" style="left:30.20px;top:228.40px;transform:scaleX(0.9273)">91</div>
<div class="c" style="left:183.30px;top:228.40px;transform:scaleX(0.9273)"><span class="v">smtpClient</span>.<span class="m">Send</span>(<span class="v">from</span>, <span class="v">to</span>, <span class="s">"Errors in "</span> + <span class="v">searchPattern</span>, <span class="v">errorline</span>);</div>
<div class="n" style="left:30.20px;top:241.40px;transform:scaleX(0.9273)">92</div>
<div class="c" style="left:161.04px;top:241.40px;transform:scaleX(0.9273)">} <span class="k">catch</span></div>
<div class="n" style="left:30.20px;top:253.40px;transform:scaleX(0.9273)">93</div>
<div class="c" style="left:161.04px;top:253.40px;transform:scaleX(0.9273)">{</div>
<div class="n" style="left:30.20px;top:266.40px;transform:scaleX(0.9273)">94</div>
<div class="c" style="left:183.30px;top:266.40px;transform:scaleX(0.9273)">Log.<span class="m">Error</span>(<span class="s">"Error sending email"</span>);</div>
<div class="n" style="left:30.20px;top:279.40px;transform:scaleX(0.9273)">95</div>
<div class="c" style="left:161.04px;top:279.40px;transform:scaleX(0.9273)">}</div>
<div class="n" style="left:30.20px;top:291.40px;transform:scaleX(0.9273)">96</div>
<div class="c" style="left:161.04px;top:291.40px;transform:scaleX(0.9273)"><span class="g">//if you don't have email, comment the above block the following line will put the result in response field</span></div>
<div class="n" style="left:30.20px;top:304.40px;transform:scaleX(0.9273)">97</div>
<div class="c" style="left:161.04px;top:304.40px;transform:scaleX(0.9273)">Response = <span class="s">"Success with Errors found in "</span> + <span class="v">searchPattern</span> + <span class="s">" "</span>+ <span class="v">errorline</span>;</div>
<div class="n" style="left:30.20px;top:317.40px;transform:scaleX(0.9273)">98</div>
<div class="c" style="left:161.04px;top:317.40px;transform:scaleX(0.9273)"><span class="v">IsComplete</span> = <span class="b">true</span>;</div>
<div class="n" style="left:30.20px;top:330.40px;transform:scaleX(0.9273)">99</div>
<div class="c" style="left:138.78px;top:330.40px;transform:scaleX(0.9273)">}</div>
</div>
<!-- vertical scroll bar -->
<svg class="a" style="left:771.50px;top:116.25px;" width="6.6" height="4.09" viewBox="0 0 6.6 4.09"><path d="M0 4.09 L6.60 4.09 L3.30 0 Z" fill="#868999"/></svg>
<svg class="a" style="left:771.50px;top:437.95px;" width="6.6" height="4.09" viewBox="0 0 6.6 4.09"><path d="M0 0 L6.60 0 L3.30 4.09 Z" fill="#868999"/></svg>
<div class="a" style="left:768.90px;top:263.40px;width:12.00px;height:48.90px;background:#c2c3c9;"></div>
<div class="a" style="left:765.90px;top:232.70px;width:4.10px;height:6.30px;background:#6fd86f;"></div>
<div class="a" style="left:775.10px;top:264.10px;width:3.90px;height:4.70px;background:#a02a2a;"></div>
<div class="a" style="left:765.90px;top:264.80px;width:18.00px;height:1.50px;background:#0000c8;"></div>
<!-- editor bottom margin -->
<div class="a" style="left:5.80px;top:447.00px;width:778.10px;height:13.40px;background:#e8e8ec;"></div>
<div class="a" style="left:5.80px;top:447.40px;width:46.50px;height:13.00px;background:#ffffff;box-shadow:inset 0 0 0 0.8px #c9d0ea;"></div>
<div class="t" style="left:7.32px;top:450px;color:#1e1e1e;transform:scaleX(0.7926);">100 %</div>
<svg class="a" style="left:45.80px;top:453.00px;" width="4.6" height="3" viewBox="0 0 4.6 3"><path d="M0 0.2 H4.6 L2.3 2.6 Z" fill="#1e1e1e"/></svg>
<svg class="a" style="left:72.90px;top:450.00px;" width="8" height="8" viewBox="0 0 8 8"><circle cx="4" cy="4" r="3.75" fill="#2f9e3a"/><path d="M2.1 4.1 L3.5 5.5 L6 2.7" fill="none" stroke="#ffffff" stroke-width="1.1"/></svg>
<div class="t" style="left:84.83px;top:450px;color:#1e1e1e;transform:scaleX(0.8980);">No issues found</div>
<div class="a" style="left:198.30px;top:448.30px;width:0.90px;height:10.20px;background:#b9bcc8;"></div>
<svg class="a" style="left:210.40px;top:448.60px;" width="10.4" height="9.6" viewBox="0 0 10.4 9.6"><path d="M0.7 4.8 L5.4 2.3 L8.8 6.3 L4.6 9 Z" fill="#f4f4f6" stroke="#444" stroke-width="0.9"/><path d="M5.4 2.3 L8.8 6.3 L7.5 7.1 L4.1 3 Z" fill="#444"/><path d="M7 3.3 L9.6 0.7" stroke="#444" stroke-width="1.2"/></svg>
<svg class="a" style="left:223.70px;top:452.40px;" width="5.2" height="3" viewBox="0 0 5.2 3"><path d="M0 0.2 H5.2 L2.6 2.6 Z" fill="#1e1e1e"/></svg>
<svg class="a" style="left:252.65px;top:450.40px;" width="4.09" height="6.6" viewBox="0 0 4.09 6.6"><path d="M4.09 0 L4.09 6.60 L0 3.30 Z" fill="#868999"/></svg>
<div class="a" style="left:261.60px;top:450.00px;width:220.10px;height:7.10px;background:#c2c3c9;"></div>
<svg class="a" style="left:619.85px;top:450.40px;" width="4.09" height="6.6" viewBox="0 0 4.09 6.6"><path d="M0 0 L0 6.60 L4.09 3.30 Z" fill="#868999"/></svg>
<div class="t" style="left:645.88px;top:450px;color:#1e1e1e;transform:scaleX(0.8434);">Ln: 75</div>
<div class="t" style="left:684.77px;top:450px;color:#1e1e1e;transform:scaleX(0.8140);">Ch: 21</div>
<div class="t" style="left:725.17px;top:450px;color:#1e1e1e;transform:scaleX(0.7019);">SPC</div>
<div class="t" style="left:756.22px;top:450px;color:#1e1e1e;transform:scaleX(0.7286);">CRLF</div>
<!-- Immediate Window -->
<div class="a" style="left:5.80px;top:569.00px;width:90.20px;height:16.80px;background:#f7f9fe;"></div>
<div class="a" style="left:96.80px;top:569.00px;width:45.20px;height:16.80px;background:#40568d;"></div>
<div class="a" style="left:96.00px;top:569.00px;width:47.00px;height:1.90px;background:#5d6b99;"></div>
<div class="a" style="left:5.80px;top:482.00px;width:778.20px;height:87.80px;background:#e8e8ec;"></div>
<div class="a" style="left:5.80px;top:482.00px;width:763.40px;height:74.90px;background:#e6e7e8;"></div>
<div class="a" style="left:5.80px;top:466.90px;width:778.20px;height:16.00px;background:#40568d;"></div>
<div class="t l" style="left:8.04px;top:471px;color:#ffffff;transform:scaleX(0.9458);">Immediate Window</div>
<svg class="a" style="left:745.80px;top:473.20px;" width="6.4" height="3.6" viewBox="0 0 6.4 3.6"><path d="M0.1 0.2 H6.3 L3.2 3.4 Z" fill="#c5cbe2"/></svg>
<svg class="a" style="left:758.50px;top:470.50px;" width="6.4" height="9" viewBox="0 0 6.4 9"><path d="M1.6 0.6 H4.8 V4.6 H1.6 Z M0.5 4.8 H5.9 M3.2 4.8 V8.6 M4 0.8 V4.4" fill="none" stroke="#b9c1dd" stroke-width="0.9"/></svg>
<svg class="a" style="left:771.80px;top:471.50px;" width="7.2" height="7" viewBox="0 0 7.2 7"><path d="M0.6 0.6 L6.6 6.4 M6.6 0.6 L0.6 6.4" stroke="#bcc4df" stroke-width="1.15"/></svg>
<svg class="a" style="left:772.90px;top:488.35px;" width="6.6" height="4.09" viewBox="0 0 6.6 4.09"><path d="M0 4.09 L6.60 4.09 L3.30 0 Z" fill="#868999"/></svg>
<svg class="a" style="left:772.90px;top:547.75px;" width="6.6" height="4.09" viewBox="0 0 6.6 4.09"><path d="M0 0 L6.60 0 L3.30 4.09 Z" fill="#868999"/></svg>
<div class="a" style="left:772.30px;top:497.00px;width:8.60px;height:39.40px;background:#c2c3c9;"></div>
<div class="a" style="left:769.00px;top:495.10px;width:15.00px;height:1.90px;background:#0000c0;"></div>
<svg class="a" style="left:10.35px;top:560.10px;" width="4.09" height="6.6" viewBox="0 0 4.09 6.6"><path d="M4.09 0 L4.09 6.60 L0 3.30 Z" fill="#cdced6"/></svg>
<svg class="a" style="left:759.55px;top:560.10px;" width="4.09" height="6.6" viewBox="0 0 4.09 6.6"><path d="M0 0 L0 6.60 L4.09 3.30 Z" fill="#cdced6"/></svg>
<!-- bottom tool window tabs -->
<div class="t" style="left:9.05px;top:573px;color:#1e1e1e;transform:scaleX(0.9383);">Immediate Window</div>
<div class="t" style="left:101.46px;top:573px;color:#e6e9f6;transform:scaleX(0.8690);-webkit-text-stroke:0;">Error List</div>
<!-- Properties -->
<div class="a" style="left:790.30px;top:93.00px;width:201.70px;height:492.70px;background:#f7f9fe;"></div>
<div class="a" style="left:790.30px;top:113.00px;width:200.70px;height:21.10px;background:#ccd5f0;"></div>
<div class="a" style="left:790.30px;top:93.00px;width:201.70px;height:21.10px;background:#ffffff;"></div>
<div class="a" style="left:790.30px;top:77.90px;width:201.70px;height:16.70px;background:#40568d;"></div>
<div class="t l" style="left:793.18px;top:82px;color:#ffffff;transform:scaleX(0.8978);">Properties</div>
<svg class="a" style="left:954.10px;top:84.00px;" width="6.4" height="3.6" viewBox="0 0 6.4 3.6"><path d="M0.1 0.2 H6.3 L3.2 3.4 Z" fill="#c5cbe2"/></svg>
<svg class="a" style="left:967.20px;top:81.30px;" width="6.4" height="9" viewBox="0 0 6.4 9"><path d="M1.6 0.6 H4.8 V4.6 H1.6 Z M0.5 4.8 H5.9 M3.2 4.8 V8.6 M4 0.8 V4.4" fill="none" stroke="#b9c1dd" stroke-width="0.9"/></svg>
<svg class="a" style="left:979.70px;top:82.20px;" width="7.2" height="7" viewBox="0 0 7.2 7"><path d="M0.6 0.6 L6.6 6.4 M6.6 0.6 L0.6 6.4" stroke="#bcc4df" stroke-width="1.15"/></svg>
<svg class="a" style="left:984.70px;top:102.90px;" width="4.4" height="3" viewBox="0 0 4.4 3"><path d="M0 0.2 H4.4 L2.2 2.6 Z" fill="#1e1e1e"/></svg>
<div class="a" style="left:790.30px;top:535.60px;width:201.70px;height:0.90px;background:#e4e6ee;"></div>
<svg class="a" style="left:796.00px;top:117.60px;" width="12.6" height="13" viewBox="0 0 12.6 13"><g fill="#3c3c3c"><rect x="0.5" y="0.7" width="4.4" height="4.1"/><rect x="0.5" y="8.1" width="4.4" height="4.1"/></g><g fill="#f4f6fc"><rect x="1.5" y="2.35" width="2.4" height="0.8"/><rect x="2.3" y="1.55" width="0.8" height="2.4"/><rect x="1.5" y="9.75" width="2.4" height="0.8"/></g><g stroke="#4a4a4a" stroke-width="1" stroke-dasharray="1.7 0.6" fill="none"><path d="M5.8 1.3 H9.6 M5.8 3 H11.6 M5.8 4.7 H11.6 M5.8 8.7 H9.6 M5.8 10.4 H11.6 M5.8 12.1 H11.6"/></g></svg>
<div class="a" style="left:811.10px;top:115.30px;width:17.90px;height:17.40px;background:#fdebc8;box-shadow:inset 0 0 0 1px #e6c27c;"></div>
<div class="a" style="left:813.90px;top:118.10px;width:6.00px;height:5.70px;background:#454545;"></div>
<div class="t l" style="left:814.86px;top:116px;font-size:6.2px;color:#ffffff;font-weight:bold;transform:scaleX(0.9136);">A</div>
<div class="t" style="left:814.35px;top:123px;font-size:6.6px;color:#3a3a3a;font-weight:bold;transform:scaleX(1.2621);">Z</div>
<svg class="a" style="left:819.60px;top:120.50px;" width="7" height="9" viewBox="0 0 7 9"><path d="M3.3 0.6 V6.4" stroke="#0b57b4" stroke-width="2.1"/><path d="M0.5 4.6 H6.1 L3.3 8.2 Z" fill="#0b57b4"/></svg>
<div class="a" style="left:831.30px;top:116.80px;width:1.00px;height:15.80px;background:#b3bfe3;"></div>
<svg class="a" style="left:836.40px;top:117.40px;" width="13.6" height="13.6" viewBox="0 0 13.6 13.6"><path d="M2.3 11.1 L7.4 6" stroke="#9b9ca6" stroke-width="2.6" stroke-linecap="round"/><circle cx="9.3" cy="4" r="3.2" fill="#9b9ca6"/><path d="M9.3 4 L10.4 -0.4 L13.6 2.6 Z" fill="#ccd5f0"/><circle cx="9.9" cy="3.4" r="1.1" fill="#ccd5f0"/></svg>
<!-- auto-hide channel -->
<div class="a" style="left:1012.60px;top:76.60px;width:4.90px;height:72.40px;background:#40568d;"></div>
<div class="a" style="left:1012.60px;top:158.10px;width:4.90px;height:59.20px;background:#40568d;"></div>
<div class="t l0" style="left:1008.80px;top:76.97px;font-size:10.0px;color:#ffffff;transform:rotate(90deg) scaleX(0.9413);">Solution Explorer</div>
<div class="t l0" style="left:1008.80px;top:158.60px;font-size:10.0px;color:#ffffff;transform:rotate(90deg) scaleX(0.8928);">Team Explorer</div>
</body>
</html>
